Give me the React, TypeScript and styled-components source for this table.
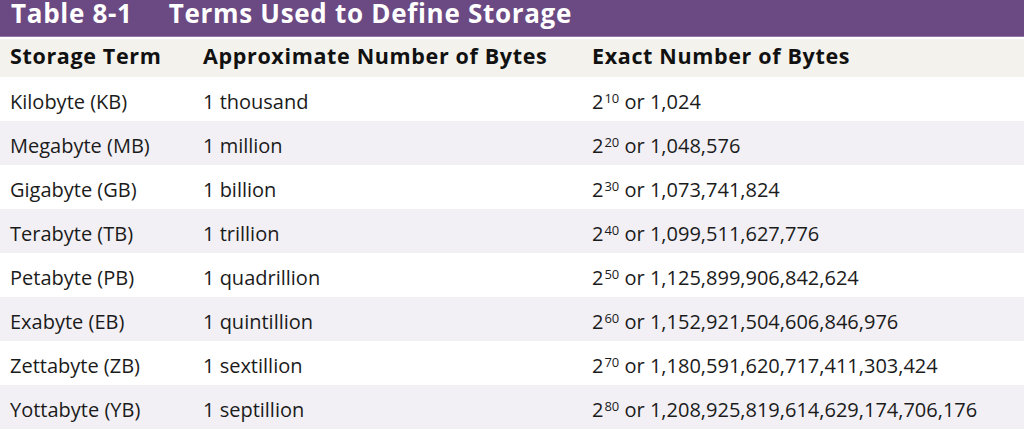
import styled, { createGlobalStyle } from "styled-components";

const GlobalStyle = createGlobalStyle`
  html, body {
    margin: 0;
    padding: 0;
    background: #ffffff;
  }
  body {
    font-family: "Open Sans", "Noto Sans", sans-serif;
    color: #1b1b1b;
  }
`;

interface Row {
  term: string;
  approx: string;
  power: number;
  exact: string;
}

const rows: Row[] = [
  { term: "Kilobyte (KB)", approx: "1 thousand", power: 10, exact: "1,024" },
  { term: "Megabyte (MB)", approx: "1 million", power: 20, exact: "1,048,576" },
  { term: "Gigabyte (GB)", approx: "1 billion", power: 30, exact: "1,073,741,824" },
  { term: "Terabyte (TB)", approx: "1 trillion", power: 40, exact: "1,099,511,627,776" },
  { term: "Petabyte (PB)", approx: "1 quadrillion", power: 50, exact: "1,125,899,906,842,624" },
  { term: "Exabyte (EB)", approx: "1 quintillion", power: 60, exact: "1,152,921,504,606,846,976" },
  { term: "Zettabyte (ZB)", approx: "1 sextillion", power: 70, exact: "1,180,591,620,717,411,303,424" },
  { term: "Yottabyte (YB)", approx: "1 septillion", power: 80, exact: "1,208,925,819,614,629,174,706,176" },
];

const Wrapper = styled.div`
  width: 1024px;
`;

const TitleBar = styled.div`
  height: 36px;
  background: #6b4a84;
  border-bottom: 1px solid #9178a6;
  display: flex;
  align-items: flex-start;
  padding-left: 11px;
  gap: 36px;
  color: #ffffff;
  font-size: 26px;
  line-height: 26px;
  font-weight: 700;
  letter-spacing: 0.7px;
`;

const Grid = styled.div`
  margin-top: 2px;
  display: grid;
  grid-template-columns: 193px 389px 1fr;
`;

const RowGroup = styled.div`
  display: contents;
`;

const HeadCell = styled.div`
  height: 38px;
  box-sizing: border-box;
  padding: 0 0 5px 10px;
  background: #f3f2ec;
  display: flex;
  align-items: center;
  font-size: 21.5px;
  font-weight: 700;
  letter-spacing: 0.65px;
  color: #111111;
  white-space: nowrap;
`;

const Cell = styled.div<{ $shaded: boolean }>`
  height: 44px;
  box-sizing: border-box;
  padding: 4px 0 0 10px;
  background: ${(p) => (p.$shaded ? "#f2f0f5" : "#ffffff")};
  display: flex;
  align-items: center;
  font-size: 20px;
  white-space: nowrap;
`;

const Sup = styled.sup`
  font-size: 13px;
  line-height: 0;
  vertical-align: 5.5px;
  margin-left: 1px;
`;

export default function App() {
  return (
    <>
      <GlobalStyle />
      <Wrapper>
        <TitleBar>
          <span>Table 8-1</span>
          <span>Terms Used to Define Storage</span>
        </TitleBar>
        <Grid>
          <RowGroup>
            <HeadCell>Storage Term</HeadCell>
            <HeadCell>Approximate Number of Bytes</HeadCell>
            <HeadCell>Exact Number of Bytes</HeadCell>
          </RowGroup>
          {rows.map((r, i) => (
            <RowGroup key={r.term}>
              <Cell $shaded={i % 2 === 1}>{r.term}</Cell>
              <Cell $shaded={i % 2 === 1}>{r.approx}</Cell>
              <Cell $shaded={i % 2 === 1}>
                <span>
                  2<Sup>{r.power}</Sup> or {r.exact}
                </span>
              </Cell>
            </RowGroup>
          ))}
        </Grid>
      </Wrapper>
    </>
  );
}
